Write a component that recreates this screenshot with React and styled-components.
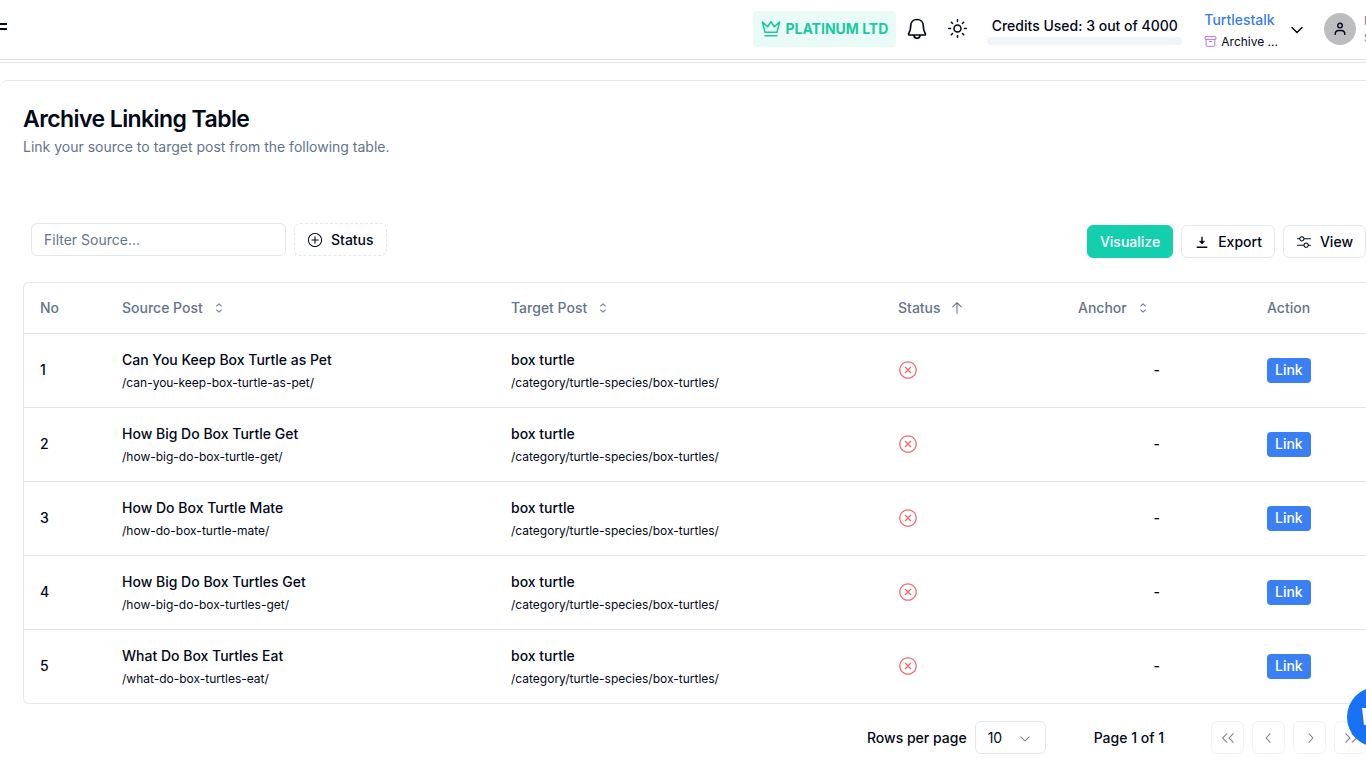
import styled, { createGlobalStyle } from "styled-components";
import { Archive, ChevronDown, Sun } from "lucide-react";
import {
  RxChevronDown,
  RxPlusCircled,
  RxMixerHorizontal,
  RxCaretSort,
  RxArrowUp,
  RxCrossCircled,
  RxDoubleArrowLeft,
  RxChevronLeft,
  RxChevronRight,
  RxDoubleArrowRight,
} from "react-icons/rx";

const GlobalStyle = createGlobalStyle`
  * {
    box-sizing: border-box;
  }

  body {
    margin: 0;
    overflow: hidden;
    background-color: #fff;
    color: #020817;
    font-family: Inter, "Liberation Sans", sans-serif;
    font-size: 14px;
    line-height: 20px;
  }

  h1, p {
    margin: 0;
  }

  button, input, select {
    font: inherit;
    color: inherit;
  }

  button {
    cursor: pointer;
  }

  svg {
    flex-shrink: 0;
  }
`;

const Header = styled.header`
  display: flex;
  align-items: center;
  justify-content: space-between;
  height: 60px;
  padding-bottom: 2px;
  border-bottom: 1px solid #e2e4e8;
`;

const MenuButton = styled.button`
  display: flex;
  width: 7px;
  padding: 0 0 4px;
  justify-content: flex-end;
  overflow: hidden;
  border: none;
  background-color: transparent;
`;

const HeaderRight = styled.div`
  display: flex;
  align-items: center;
`;

const PlanBadge = styled.div`
  display: flex;
  align-items: center;
  gap: 4px;
  height: 36px;
  padding: 0 8px;
  border-radius: 4px;
  background-color: #e9fbf7;
  color: #1fc7a0;
  font-weight: 700;
  white-space: nowrap;
`;

const IconButton = styled.button`
  display: flex;
  align-items: center;
  justify-content: center;
  width: 41px;
  height: 40px;
  padding: 0;
  border: none;
  background-color: transparent;
`;

const Credits = styled.div`
  display: flex;
  flex-direction: column;
  width: 195px;
  margin: 0 22px 0 9px;
  padding-top: 3px;
  gap: 1px;
  font-weight: 500;
  text-align: center;
  white-space: nowrap;
`;

const CreditsTrack = styled.div`
  height: 8px;
  border-radius: 4px;
  background-color: #f1f5f9;
`;

const SiteButton = styled.button`
  display: flex;
  align-items: center;
  gap: 9px;
  padding: 2px 0 0;
  border: none;
  background-color: transparent;
  text-align: left;
`;

const SiteName = styled.span`
  display: block;
  color: #3b7ddd;
  font-weight: 500;
`;

const SiteProject = styled.span`
  display: flex;
  align-items: center;
  gap: 4px;
  margin-top: 4px;
  font-size: 12px;
  line-height: 16px;

  svg {
    color: #a86fe8;
  }
`;

const Avatar = styled.button`
  display: flex;
  align-items: center;
  justify-content: center;
  width: 32px;
  height: 32px;
  margin: 0 8px 0 17px;
  padding: 0;
  border: none;
  border-radius: 50%;
  background-color: #bdbdc0;
`;

const Divider = styled.div`
  height: 3px;
  border-bottom: 1px solid #e2e4e8;
`;

const Card = styled.main`
  margin-top: 17px;
  padding: 24px 0 0 23px;
  border-top: 1px solid #e5e7eb;
  border-top-left-radius: 8px;
`;

const Title = styled.h1`
  font-size: 23px;
  line-height: 28px;
  font-weight: 600;
  letter-spacing: -0.025em;
`;

const Description = styled.p`
  margin-top: 4px;
  color: #64748b;
`;

const Toolbar = styled.div`
  display: flex;
  justify-content: space-between;
  padding: 66px 0 0 8px;
`;

const ToolbarGroup = styled.div`
  display: flex;
  align-items: ${({ $align }) => $align || "flex-start"};
  gap: 8px;
  height: 35px;
`;

const FilterInput = styled.input`
  width: 255px;
  height: 33px;
  padding: 0 12px;
  border: 1px solid #e2e8f0;
  border-radius: 6px;
  outline: none;

  &::placeholder {
    color: #64748b;
    opacity: 1;
  }
`;

const Button = styled.button`
  display: flex;
  align-items: center;
  gap: 8px;
  height: 33px;
  padding: 0 12px;
  border: 1px ${({ $dashed }) => ($dashed ? "dashed" : "solid")}
    ${({ $primary }) => ($primary ? "#14cfae" : "#e2e8f0")};
  border-radius: 6px;
  background-color: ${({ $primary }) => ($primary ? "#14cfae" : "#fff")};
  color: ${({ $primary }) => ($primary ? "#fff" : "#020817")};
  font-weight: 500;
`;

const TableFrame = styled.div`
  margin-top: 24px;
  border: 1px solid #e2e8f0;
  border-right: none;
  border-radius: 6px 0 0 6px;
`;

const Table = styled.table`
  width: 100%;
  table-layout: fixed;
  border-collapse: collapse;
  text-align: left;

  tbody tr {
    border-top: 1px solid #e2e4e8;
  }
`;

const Th = styled.th`
  width: ${({ $width }) => $width};
  height: 50px;
  padding: 0 16px;
  color: #64748b;
  font-weight: 500;
`;

const SortButton = styled.button`
  display: flex;
  align-items: center;
  gap: 8px;
  padding: 0;
  border: none;
  background-color: transparent;
  font-weight: 500;
`;

const Td = styled.td`
  height: 74px;
  padding: 0 16px;
  font-weight: 500;

  svg {
    display: block;
    color: #ef6b6b;
  }
`;

const Path = styled.div`
  margin-top: 5px;
  font-size: 12px;
  line-height: 16px;
  font-weight: 400;
`;

const AnchorValue = styled.div`
  width: 82px;
  text-align: right;
`;

const LinkButton = styled.button`
  display: block;
  height: 25px;
  padding: 0 8px;
  border: none;
  border-radius: 4px;
  background-color: #3b7ff5;
  color: #fff;
  font-weight: 500;
`;

const Pagination = styled.div`
  display: flex;
  align-items: center;
  justify-content: flex-end;
  padding-top: 17px;
  font-weight: 500;
`;

const SelectBox = styled.div`
  display: grid;
  align-items: center;
  width: 71px;
  margin-left: 8px;

  select, svg {
    grid-area: 1 / 1;
  }

  select {
    width: 100%;
    height: 33px;
    padding: 0 12px;
    appearance: none;
    border: 1px solid #e2e8f0;
    border-radius: 6px;
    background-color: #fff;
    font-weight: 400;
  }

  svg {
    justify-self: end;
    margin-right: 13px;
    color: #7d828b;
    pointer-events: none;
  }
`;

const PageInfo = styled.span`
  margin: 0 47px 0 48px;
`;

const PageButtons = styled.div`
  display: flex;
  gap: 8px;
  margin-right: -1px;
`;

const PageButton = styled.button`
  display: flex;
  align-items: center;
  justify-content: center;
  width: 33px;
  height: 33px;
  padding: 0;
  border: 1px solid #f0f3f7;
  border-radius: 6px;
  background-color: #fff;
  color: #80848b;
`;

const ChatButton = styled.button`
  position: fixed;
  right: -41px;
  bottom: 21px;
  display: flex;
  align-items: center;
  width: 60px;
  height: 60px;
  padding: 0 0 0 15px;
  border: none;
  border-radius: 50%;
  background-color: #1972f5;
`;

const UserLabel = styled.div`
  width: 2px;
  overflow: hidden;
  font-size: 12px;
  line-height: 17px;
  color: #64748b;
`;

const columns = [
  { label: "No", width: "82px" },
  { label: "Source Post", width: "389px", icon: RxCaretSort },
  { label: "Target Post", width: "387px", icon: RxCaretSort },
  { label: "Status", width: "180px", icon: RxArrowUp },
  { label: "Anchor", width: "189px", icon: RxCaretSort },
  { label: "Action" },
];

const posts = [
  { title: "Can You Keep Box Turtle as Pet", path: "/can-you-keep-box-turtle-as-pet/" },
  { title: "How Big Do Box Turtle Get", path: "/how-big-do-box-turtle-get/" },
  { title: "How Do Box Turtle Mate", path: "/how-do-box-turtle-mate/" },
  { title: "How Big Do Box Turtles Get", path: "/how-big-do-box-turtles-get/" },
  { title: "What Do Box Turtles Eat", path: "/what-do-box-turtles-eat/" },
];

const pageActions = [
  { label: "First page", icon: RxDoubleArrowLeft },
  { label: "Previous page", icon: RxChevronLeft },
  { label: "Next page", icon: RxChevronRight },
  { label: "Last page", icon: RxDoubleArrowRight },
];

const CrownIcon = () => (
  <svg width="20" height="20" viewBox="0 0 20 20" fill="none" stroke="currentColor" strokeWidth="1.6" strokeLinejoin="round" strokeLinecap="round">
    <path d="M1.5 3.2 4 13.2h12l2.5-10-5.2 4.6L10 2.6 6.7 7.8zM4 16.8h12" />
  </svg>
);

const BellIcon = () => (
  <svg width="20" height="22" viewBox="0 0 20 22" fill="none" stroke="currentColor" strokeWidth="1.7" strokeLinejoin="round" strokeLinecap="round">
    <path d="M10 1.5c-3.8 0-6.3 2.8-6.3 6.4 0 4.300-1 6.200-2 7.800-.3.600 0 1.300.7 1.300h15.200c.7 0 1-.7.7-1.300-1-1.600-2-3.500-2-7.800 0-3.600-2.500-6.400-6.300-6.400zM6.900 17.200c.2 1.900 1.500 3.100 3.100 3.100s2.900-1.200 3.100-3.100" />
  </svg>
);

const PersonIcon = () => (
  <svg width="14" height="14" viewBox="0 0 14 14" fill="none" stroke="currentColor" strokeWidth="1.4" strokeLinecap="round">
    <circle cx="7" cy="3.600" r="2.300" />
    <path d="M2.200 12.400v-.6a3.600 3.600 0 0 1 3.600-3.300h2.400a3.600 3.600 0 0 1 3.600 3.300v.6" />
  </svg>
);

const DownloadIcon = () => (
  <svg width="16" height="16" viewBox="0 0 16 16" fill="none" stroke="currentColor" strokeWidth="1.4">
    <path d="M8 2.800v6M2.700 13.300h10.600" />
    <path d="M5.600 7.300h4.800L8 10z" fill="currentColor" strokeWidth="0.800" strokeLinejoin="round" />
  </svg>
);

const TopBar = () => (
  <Header>
    <MenuButton aria-label="Menu">
      <svg width="18" height="10" viewBox="0 0 18 10" fill="none" stroke="currentColor" strokeWidth="2">
        <path d="M0 2h18M0 7h18" />
      </svg>
    </MenuButton>
    <HeaderRight>
      <PlanBadge>
        <CrownIcon />
        PLATINUM LTD
      </PlanBadge>
      <IconButton aria-label="Notifications">
        <BellIcon />
      </IconButton>
      <IconButton aria-label="Theme">
        <Sun size={21} strokeWidth={1.75} />
      </IconButton>
      <Credits>
        Credits Used: 3 out of 4000
        <CreditsTrack />
      </Credits>
      <SiteButton>
        <span>
          <SiteName>Turtlestalk</SiteName>
          <SiteProject>
            <Archive size={13} strokeWidth={1.75} />
            Archive ...
          </SiteProject>
        </span>
        <ChevronDown size={20} strokeWidth={1.75} />
      </SiteButton>
      <Avatar aria-label="Account">
        <PersonIcon />
      </Avatar>
      <UserLabel>
        <div>M</div>
        <div>S</div>
      </UserLabel>
    </HeaderRight>
  </Header>
);

const LinkingTable = () => (
  <TableFrame>
    <Table>
      <thead>
        <tr>
          {columns.map(({ label, width, icon: Icon }) => (
            <Th key={label} $width={width}>
              {Icon ? (
                <SortButton>
                  {label}
                  <Icon size={16} />
                </SortButton>
              ) : (
                label
              )}
            </Th>
          ))}
        </tr>
      </thead>
      <tbody>
        {posts.map((post, index) => (
          <tr key={post.path}>
            <Td>{index + 1}</Td>
            <Td>
              {post.title}
              <Path>{post.path}</Path>
            </Td>
            <Td>
              box turtle
              <Path>/category/turtle-species/box-turtles/</Path>
            </Td>
            <Td>
              <RxCrossCircled size={20} />
            </Td>
            <Td>
              <AnchorValue>-</AnchorValue>
            </Td>
            <Td>
              <LinkButton>Link</LinkButton>
            </Td>
          </tr>
        ))}
      </tbody>
    </Table>
  </TableFrame>
);

const App = () => (
  <>
    <GlobalStyle />
    <TopBar />
    <Divider />
    <Card>
      <Title>Archive Linking Table</Title>
      <Description>Link your source to target post from the following table.</Description>
      <Toolbar>
        <ToolbarGroup>
          <FilterInput placeholder="Filter Source..." aria-label="Filter source" />
          <Button $dashed>
            <RxPlusCircled size={16} />
            Status
          </Button>
        </ToolbarGroup>
        <ToolbarGroup $align="flex-end">
          <Button $primary>Visualize</Button>
          <Button>
            <DownloadIcon />
            Export
          </Button>
          <Button>
            <RxMixerHorizontal size={16} />
            View
          </Button>
        </ToolbarGroup>
      </Toolbar>
      <LinkingTable />
      <Pagination>
        <label htmlFor="rows">Rows per page</label>
        <SelectBox>
          <select id="rows" defaultValue="10">
            <option>10</option>
            <option>20</option>
            <option>50</option>
          </select>
          <RxChevronDown size={16} />
        </SelectBox>
        <PageInfo>Page 1 of 1</PageInfo>
        <PageButtons>
          {pageActions.map(({ label, icon: Icon }) => (
            <PageButton key={label} aria-label={label}>
              <Icon size={16} />
            </PageButton>
          ))}
        </PageButtons>
      </Pagination>
    </Card>
    <ChatButton aria-label="Open chat">
      <svg width="30" height="30" viewBox="0 0 30 30" fill="#fff">
        <path d="M0 6h30v17H2z" />
      </svg>
    </ChatButton>
  </>
);

export default App;
